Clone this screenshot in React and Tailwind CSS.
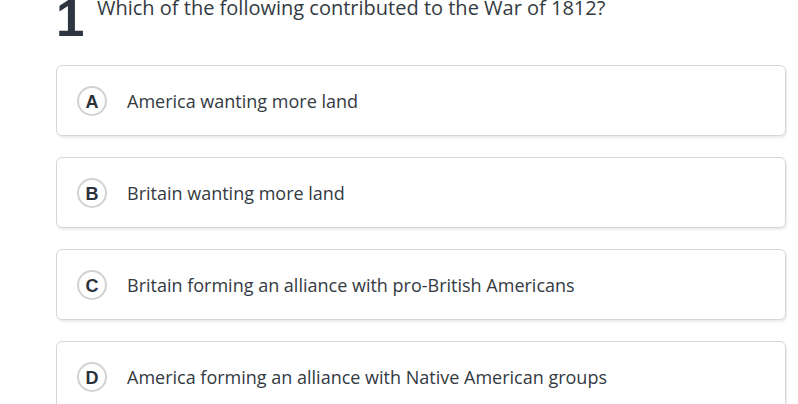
import React from 'react';

const options = [
  { letter: 'A', text: 'America wanting more land' },
  { letter: 'B', text: 'Britain wanting more land' },
  { letter: 'C', text: 'Britain forming an alliance with pro-British Americans' },
  { letter: 'D', text: 'America forming an alliance with Native American groups' },
];

const Option = ({ letter, text }) => (
  <button
    type="button"
    className="flex h-[71px] w-full items-center rounded-[6px] border border-[#d6d6d6] bg-white pl-[20px] text-left shadow-[1px_2px_2px_rgba(0,0,0,0.08)]"
  >
    <span
      className="flex h-[30px] w-[30px] shrink-0 items-center justify-center rounded-full border-2 border-[#d2d2d2] pt-[3px] text-[18px] font-bold text-[#2b323b]"
      style={{ fontFamily: '"Liberation Sans", sans-serif' }}
    >
      {letter}
    </span>
    <span className="ml-[20px] mt-[1px] text-[18px] text-[#333a42]">{text}</span>
  </button>
);

export default function App() {
  return (
    <div
      className="h-[404px] w-[798px] overflow-hidden bg-white"
      style={{ fontFamily: '"Open Sans", "Liberation Sans", sans-serif' }}
    >
      <div className="pl-[56px] pr-[12px]">
        <div className="flex h-[36px] items-start">
          <div
            className="-mt-[7px] w-[41px] text-[51px] font-bold leading-none text-[#2d3540]"
            style={{ fontFamily: '"Liberation Sans", sans-serif' }}
          >
            1
          </div>
          <h1 className="-mt-[6px] text-[20px] leading-[28px] text-[#333a42]">
            Which of the following contributed to the War of 1812?
          </h1>
        </div>
        <div className="mt-[29px] flex flex-col gap-[21px]">
          {options.map((o) => (
            <Option key={o.letter} {...o} />
          ))}
        </div>
      </div>
    </div>
  );
}
